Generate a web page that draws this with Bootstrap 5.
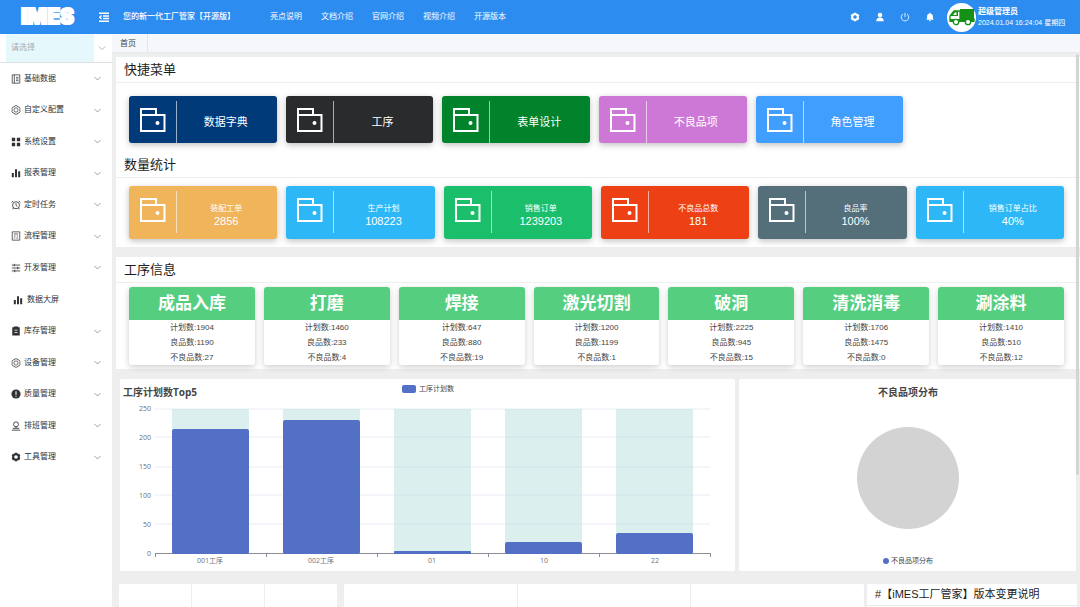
<!DOCTYPE html>
<html lang="zh-CN">
<head>
<meta charset="utf-8">
<meta name="viewport" content="width=device-width, initial-scale=1">
<title>iMES工厂管家</title>
<link href="https://cdn.jsdelivr.net/npm/bootstrap@5.3.0/dist/css/bootstrap.min.css" rel="stylesheet">
<script src="https://cdn.jsdelivr.net/npm/bootstrap@5.3.0/dist/js/bootstrap.bundle.min.js" defer></script>
<style>
  body { font-family: "Liberation Sans", "Noto Sans CJK SC", sans-serif; font-size: 8px; line-height: 12px; color: #303133; background: #eee; }
  svg { display: block; flex: none; }
  .ico { width: 10px; height: 10px; fill: none; stroke: currentColor; stroke-width: 1; }

  .topbar { height: 34px; background: #2d8cf0; color: #fff; }
  .topbar a, .topbar button { color: #fff; text-decoration: none; }
  .plain { background: none; border: 0; padding: 0; }
  .logo { width: 95px; padding-left: 21px; font: 900 21px/34px Inter, sans-serif; -webkit-text-stroke: 2px #fff; }
  .slogan { width: 145px; padding-left: 14px; font-weight: 500; }
  .topnav { gap: 19px; }
  .tools { gap: 15px; }
  .avatar { width: 29px; height: 29px; background: #fff; margin-left: 12px; }
  .who { width: 104px; padding-left: 2px; line-height: 11px; }
  .who time { font-size: 7px; }

  .side { width: 112px; background: #fff; }
  .picker { height: 29px; border-bottom: 1px solid #dcdfe6; }
  .picker select { width: 100%; height: 28px; appearance: none; border: 0; border-radius: 0; padding: 0 18px 0 11px; color: #a8abb2; background: linear-gradient(#e5f9fc, #e5f9fc) 6px 0 / calc(100% - 24px) 100% no-repeat #fff; }
  .picker svg { right: 5px; top: 9px; color: #a8abb2; }
  .menu { min-height: 410px; grid-auto-rows: 1fr; }
  .menu a { color: #303133; text-decoration: none; padding: 0 10px 0 11px; gap: 3px; }
  .menu a.leaf { padding-left: 13px; gap: 4px; }
  .menu .arrow { margin-left: auto; width: 9px; height: 9px; color: #808287; }

  .tabs { height: 19px; background: #f5f7fb; border-bottom: 1px solid #e8eaee; }
  .tabs a { width: 36px; line-height: 19px; color: #444; text-decoration: none; border-right: 1px solid #e2e5ec; text-align: center; padding-right: 3px; }
  .view { padding: 4px 0 0 4px; }
  .thumb { right: 1px; top: 1px; width: 3px; height: 76%; border-radius: 2px; background: #d3d4d6; }
  .panel { background: #fff; margin-bottom: 10px; }
  .panel h2 { font-size: 13px; line-height: 25px; font-weight: 400; color: #1c1c1c; margin: 0; padding-left: 8px; border-bottom: 1px solid #eee; }
  .tiles { display: grid; grid-template-columns: repeat(6, 1fr); gap: 9px; margin: 8px 16px 0 13px; }
  .tiles.quick { margin: 13px 20px 9px 13px; }
  .tile { height: 53px; color: #fff; border-radius: 3px; box-shadow: 0 2px 6px rgba(0,0,0,.25); text-decoration: none; display: flex; }
  .quick .tile { height: 47px; font-size: 11px; }
  .tile > svg { width: 27px; height: 26px; margin: 11px 0 0 10px; fill: none; stroke: #fff; stroke-width: 2; }
  .tile > span { flex: 1; height: 42px; margin: 5px 0 0 10px; border-left: 1px solid rgba(255,255,255,.6); text-align: center; padding: 12px 2px 0 0; }
  .quick .tile > span { padding-top: 15px; }
  .tile b { display: block; font-size: 11px; font-weight: 400; }
  .c-navy { background: #003a79; } .c-ink { background: #2a2b2d; } .c-leaf { background: #00832a; } .c-orchid { background: #cd78d6; } .c-blue { background: #409eff; }
  .c-sand { background: #f0b45a; } .c-sky { background: #2eb7f7; } .c-green { background: #1bbf6b; } .c-red { background: #ee4015; } .c-slate { background: #546e7a; }
  .steps { display: grid; grid-template-columns: repeat(7, 1fr); gap: 9px; margin: 4px 16px 0 13px; }
  .steps article { border-radius: 3px; box-shadow: 0 2px 6px rgba(0,0,0,.2); text-align: center; line-height: 15px; color: #444; overflow: hidden; }
  .steps h3 { font-size: 17px; line-height: 33px; font-weight: 700; color: #fff; background: #56ce80; margin: 0; }
  .steps p { margin: 0; }
  .charts { display: grid; grid-template-columns: 615fr 337fr; gap: 4px; margin: 0 4px 13px; }
  .charts > div, .foot > div { background: #fff; border-radius: 2px; }
  .charts svg { width: 100%; height: auto; font-family: "Open Sans", "Noto Sans CJK SC", sans-serif; font-size: 7px; }
  .charts .ttl { font-size: 10px; font-weight: 700; fill: #464646; }
  .foot { display: grid; grid-template-columns: 217fr 522fr 209fr; gap: 3px; margin: 0 3px; }
  .foot > div { height: 60px; display: flex; }
  .foot i { flex: 1; border-left: 1px solid #eee; }
  .foot i:first-child { border: 0; }
  .foot h2 { width: 100%; font-size: 11px; line-height: 21px; height: 22px; margin: 0; padding-left: 8px; color: #1c1c1c; font-weight: 400; border-bottom: 1px solid #e8e8e8; white-space: nowrap; }
</style>
</head>
<body class="vh-100 d-flex flex-column overflow-hidden">
<svg class="d-none">
  <symbol id="wallet" viewBox="0 0 27 26"><path d="M2 8h23.500v16H2zM2 8V2h15v6"/><circle cx="18.500" cy="16" r="2" fill="#fff" stroke="none"/></symbol>
  <symbol id="down" viewBox="0 0 12 12"><path d="M2 4l4 4 4-4"/></symbol>
  <symbol id="book" viewBox="0 0 12 12"><path d="M1.500 1h9v10h-9zM4 1v10M6 4h3M6 6h3M6 8h3" stroke-width=".9"/></symbol>
  <symbol id="cog" viewBox="0 0 12 12"><path d="M4.500 1h3l.6 1.400 1.600-.1 1.400 2.500L10.200 6l.9 1.200-1.400 2.500-1.600-.1L7.500 11h-3l-.6-1.400-1.600.1L.9 7.200 1.800 6 .9 4.800l1.400-2.500 1.600.1z" stroke-width=".8"/><circle cx="6" cy="6" r="2.500" stroke-width=".8"/></symbol>
  <symbol id="cogfill" viewBox="0 0 12 12"><path d="M4.500.8h3l.5 1.500 1.700-.2 1.500 2.500L10.200 6l1 1.400-1.500 2.500-1.700-.2-.5 1.500h-3L4 9.700l-1.700.2L.8 7.400 1.800 6l-1-1.400 1.500-2.500 1.700.2zM6 3.800a2.200 2.200 0 100 4.400 2.200 2.200 0 000-4.400z" fill="currentColor" stroke="none" fill-rule="evenodd"/></symbol>
  <symbol id="blocks" viewBox="0 0 12 12"><path d="M1 1h4v4H1zM7 1h4v4H7zM1 7h4v4H1zM7 7h4v4H7z" fill="currentColor" stroke="none"/></symbol>
  <symbol id="bars" viewBox="0 0 12 12"><path d="M1 6h2.400v5H1zM4.800 1.500h2.400V11H4.800zM8.600 4H11v7H8.600z" fill="currentColor" stroke="none"/></symbol>
  <symbol id="clock" viewBox="0 0 12 12"><circle cx="6" cy="6.300" r="4.200"/><path d="M6 4v2.500l1.500 1M.8 3l2-2M11.200 3l-2-2M3 9.700l-1 1.500M9 9.700l1 1.500" /></symbol>
  <symbol id="flow" viewBox="0 0 12 12"><path d="M1.500 1h9v10h-9zM3.500 3.500h5M3.500 6h2M6.500 8.500h2M3.500 8.500H5M7 6h1.500" stroke-width=".9"/></symbol>
  <symbol id="sliders" viewBox="0 0 12 12"><path d="M1 2.500h10M1 6h10M1 9.500h10M4 1v3M8 4.500v3M4.500 8v3"/></symbol>
  <symbol id="clip" viewBox="0 0 12 12"><path d="M1.500 1.500h2V.5h5v1h2v10h-9zM4 4.500v1h4v-1zM4 7.500v1h4v-1z" fill="currentColor" stroke="none" fill-rule="evenodd"/></symbol>
  <symbol id="warn" viewBox="0 0 12 12"><circle cx="6" cy="6" r="5.500" fill="currentColor" stroke="none"/><path d="M6 2.800v4M6 8v1.400" stroke="#fff" stroke-width="1.300"/></symbol>
  <symbol id="stamp" viewBox="0 0 12 12"><circle cx="6" cy="4" r="3"/><path d="M6 7v2M2 8.800h8M1 11h10"/></symbol>
  <symbol id="person" viewBox="0 0 12 12"><path d="M6 1a2.700 2.700 0 012.700 2.700C8.700 5.200 7.500 6.500 6 6.500S3.300 5.200 3.300 3.700A2.700 2.700 0 016 1zM1.500 11c0-2.500 1.500-4 3-4h3c1.500 0 3 1.500 3 4z" fill="currentColor" stroke="none"/></symbol>
  <symbol id="power" viewBox="0 0 12 12"><path d="M3.500 2.500a4.500 4.500 0 105 0M6 1v5"/></symbol>
  <symbol id="bell" viewBox="0 0 12 12"><path d="M5.300.8h1.400v.9c1.900.4 2.800 1.800 2.800 3.700V8l1.300 1.300H1.200L2.500 8V5.400c0-1.900.9-3.300 2.800-3.700zM4.700 10h2.600a1.300 1.300 0 01-2.600 0z" fill="currentColor" stroke="none"/></symbol>
</svg>

<header class="topbar d-flex align-items-center flex-shrink-0">
  <div class="logo">IMES</div>
  <button class="plain ms-1" aria-label="折叠菜单"><svg width="10" height="10" viewBox="0 0 10 10" fill="none" stroke="#fff" stroke-width="1.400"><path d="M0 1.200h10M4 4h6M4 6.500h6M0 9.200h10M2.500 3.500L.8 5.200l1.700 1.700"/></svg></button>
  <div class="slogan">您的新一代工厂管家【开源版】</div>
  <nav class="topnav d-flex ms-3">
    <a href="#">亮点说明</a><a href="#">文档介绍</a><a href="#">官网介绍</a><a href="#">视频介绍</a><a href="#">开源版本</a>
  </nav>
  <div class="tools d-flex align-items-center ms-auto">
    <button class="plain" aria-label="设置"><svg class="ico"><use href="#cogfill"/></svg></button>
    <button class="plain" aria-label="用户"><svg class="ico"><use href="#person"/></svg></button>
    <button class="plain" aria-label="退出"><svg class="ico"><use href="#power"/></svg></button>
    <button class="plain" aria-label="消息"><svg class="ico"><use href="#bell"/></svg></button>
  </div>
  <div class="avatar rounded-circle d-flex align-items-center justify-content-center">
    <svg width="26" height="18" viewBox="0 0 26 18"><path d="M11 1h14v10H11z" fill="#149116"/><path d="M1 14V8l4-5h6v8h14v3M12 3h9" fill="none" stroke="#149116" stroke-width="1.300"/><path d="M1 8l4-5h4v5zM1 11h24v3H1z" fill="#149116"/><path d="M4 7l2-2.500h1.500V7z" fill="#fff"/><g fill="#fff" stroke="#149116" stroke-width="1.300"><circle cx="7" cy="14" r="2.700"/><circle cx="19" cy="14" r="2.700"/></g></svg>
  </div>
  <div class="who"><div class="fw-bold">超级管理员</div><time>2024.01.04 16:24:04 星期四</time></div>
</header>

<div class="d-flex flex-fill overflow-hidden">
  <aside class="side flex-shrink-0">
    <div class="picker position-relative">
      <select aria-label="请选择"><option>请选择</option></select>
      <svg class="ico position-absolute"><use href="#down"/></svg>
    </div>
    <nav class="menu d-grid">
      <a href="#" class="d-flex align-items-center"><svg class="ico"><use href="#book"/></svg>基础数据<svg class="ico arrow"><use href="#down"/></svg></a>
      <a href="#" class="d-flex align-items-center"><svg class="ico"><use href="#cog"/></svg>自定义配置<svg class="ico arrow"><use href="#down"/></svg></a>
      <a href="#" class="d-flex align-items-center"><svg class="ico"><use href="#blocks"/></svg>系统设置<svg class="ico arrow"><use href="#down"/></svg></a>
      <a href="#" class="d-flex align-items-center"><svg class="ico"><use href="#bars"/></svg>报表管理<svg class="ico arrow"><use href="#down"/></svg></a>
      <a href="#" class="d-flex align-items-center"><svg class="ico"><use href="#clock"/></svg>定时任务<svg class="ico arrow"><use href="#down"/></svg></a>
      <a href="#" class="d-flex align-items-center"><svg class="ico"><use href="#flow"/></svg>流程管理<svg class="ico arrow"><use href="#down"/></svg></a>
      <a href="#" class="d-flex align-items-center"><svg class="ico"><use href="#sliders"/></svg>开发管理<svg class="ico arrow"><use href="#down"/></svg></a>
      <a href="#" class="leaf d-flex align-items-center"><svg class="ico"><use href="#bars"/></svg>数据大屏</a>
      <a href="#" class="d-flex align-items-center"><svg class="ico"><use href="#clip"/></svg>库存管理<svg class="ico arrow"><use href="#down"/></svg></a>
      <a href="#" class="d-flex align-items-center"><svg class="ico"><use href="#cog"/></svg>设备管理<svg class="ico arrow"><use href="#down"/></svg></a>
      <a href="#" class="d-flex align-items-center"><svg class="ico"><use href="#warn"/></svg>质量管理<svg class="ico arrow"><use href="#down"/></svg></a>
      <a href="#" class="d-flex align-items-center"><svg class="ico"><use href="#stamp"/></svg>排班管理<svg class="ico arrow"><use href="#down"/></svg></a>
      <a href="#" class="d-flex align-items-center"><svg class="ico"><use href="#cogfill"/></svg>工具管理<svg class="ico arrow"><use href="#down"/></svg></a>
    </nav>
  </aside>

  <main class="flex-fill d-flex flex-column overflow-hidden">
    <nav class="tabs d-flex flex-shrink-0"><a href="#">首页</a></nav>
    <div class="view flex-fill position-relative overflow-hidden">
      <section class="panel pb-2">
        <h2>快捷菜单</h2>
        <div class="tiles quick">
          <a href="#" class="tile c-navy"><svg><use href="#wallet"/></svg><span>数据字典</span></a>
          <a href="#" class="tile c-ink"><svg><use href="#wallet"/></svg><span>工序</span></a>
          <a href="#" class="tile c-leaf"><svg><use href="#wallet"/></svg><span>表单设计</span></a>
          <a href="#" class="tile c-orchid"><svg><use href="#wallet"/></svg><span>不良品项</span></a>
          <a href="#" class="tile c-blue"><svg><use href="#wallet"/></svg><span>角色管理</span></a>
        </div>
        <h2>数量统计</h2>
        <div class="tiles">
          <div class="tile c-sand"><svg><use href="#wallet"/></svg><span>装配工单<b>2856</b></span></div>
          <div class="tile c-sky"><svg><use href="#wallet"/></svg><span>生产计划<b>108223</b></span></div>
          <div class="tile c-green"><svg><use href="#wallet"/></svg><span>销售订单<b>1239203</b></span></div>
          <div class="tile c-red"><svg><use href="#wallet"/></svg><span>不良品总数<b>181</b></span></div>
          <div class="tile c-slate"><svg><use href="#wallet"/></svg><span>良品率<b>100%</b></span></div>
          <div class="tile c-sky"><svg><use href="#wallet"/></svg><span>销售订单占比<b>40%</b></span></div>
        </div>
      </section>

      <section class="panel pb-1">
        <h2>工序信息</h2>
        <div class="steps">
          <article><h3>成品入库</h3><p>计划数:1904</p><p>良品数:1190</p><p>不良品数:27</p></article>
          <article><h3>打磨</h3><p>计划数:1460</p><p>良品数:233</p><p>不良品数:4</p></article>
          <article><h3>焊接</h3><p>计划数:647</p><p>良品数:880</p><p>不良品数:19</p></article>
          <article><h3>激光切割</h3><p>计划数:1200</p><p>良品数:1199</p><p>不良品数:1</p></article>
          <article><h3>破洞</h3><p>计划数:2225</p><p>良品数:945</p><p>不良品数:15</p></article>
          <article><h3>清洗消毒</h3><p>计划数:1706</p><p>良品数:1475</p><p>不良品数:0</p></article>
          <article><h3>涮涂料</h3><p>计划数:1410</p><p>良品数:510</p><p>不良品数:12</p></article>
        </div>
      </section>

      <section class="charts">
        <div>
          <svg viewBox="0 0 615 192">
            <text class="ttl" x="3" y="17">工序计划数Top5</text>
            <rect x="282" y="6" width="14" height="8" rx="2" fill="#5470c6"/>
            <text x="299" y="12" fill="#444">工序计划数</text>
            <path d="M35 30h555M35 58h555M35 88h555M35 116h555M35 145h555" stroke="#e8ecf5" fill="none"/>
            <path d="M52 30h77v144H52zM163 30h77v144h-77zM274 30h77v144h-77zM385 30h77v144h-77zM496 30h77v144h-77z" fill="#b4dfdb" fill-opacity=".48"/>
            <path d="M35 174.500h555M35.500 174v4M146.500 174v4M257.500 174v4M368.500 174v4M479.500 174v4M590.500 174v4" stroke="#8b8e96" fill="none"/>
            <g fill="#5470c6">
              <rect x="52" y="50" width="77" height="125" rx="2"/>
              <rect x="163" y="41" width="77" height="134" rx="2"/>
              <rect x="274" y="172" width="77" height="3" rx="1"/>
              <rect x="385" y="163" width="77" height="12" rx="2"/>
              <rect x="496" y="154" width="77" height="21" rx="2"/>
            </g>
            <g fill="#6e7079" text-anchor="end">
              <text x="31" y="32">250</text><text x="31" y="61">200</text><text x="31" y="90">150</text><text x="31" y="119">100</text><text x="31" y="148">50</text><text x="31" y="177">0</text>
            </g>
            <g fill="#6e7079" text-anchor="middle">
              <text x="90" y="184">001工序</text><text x="201" y="184">002工序</text><text x="312" y="184">01</text><text x="424" y="184">10</text><text x="535" y="184">22</text>
            </g>
          </svg>
        </div>
        <div>
          <svg viewBox="0 0 337 192">
            <text class="ttl" x="169" y="17" text-anchor="middle">不良品项分布</text>
            <circle cx="169" cy="99" r="51" fill="#d3d3d3"/>
            <circle cx="147" cy="182" r="3" fill="#5470c6"/>
            <text x="152" y="184" fill="#444">不良品项分布</text>
          </svg>
        </div>
      </section>

      <section class="foot">
        <div><i></i><i></i><i></i></div>
        <div class="ms-1"><i></i><i></i><i></i></div>
        <div><h2>#【iMES工厂管家】版本变更说明</h2></div>
      </section>
      <div class="thumb position-absolute"></div>
    </div>
  </main>
</div>
</body>
</html>
